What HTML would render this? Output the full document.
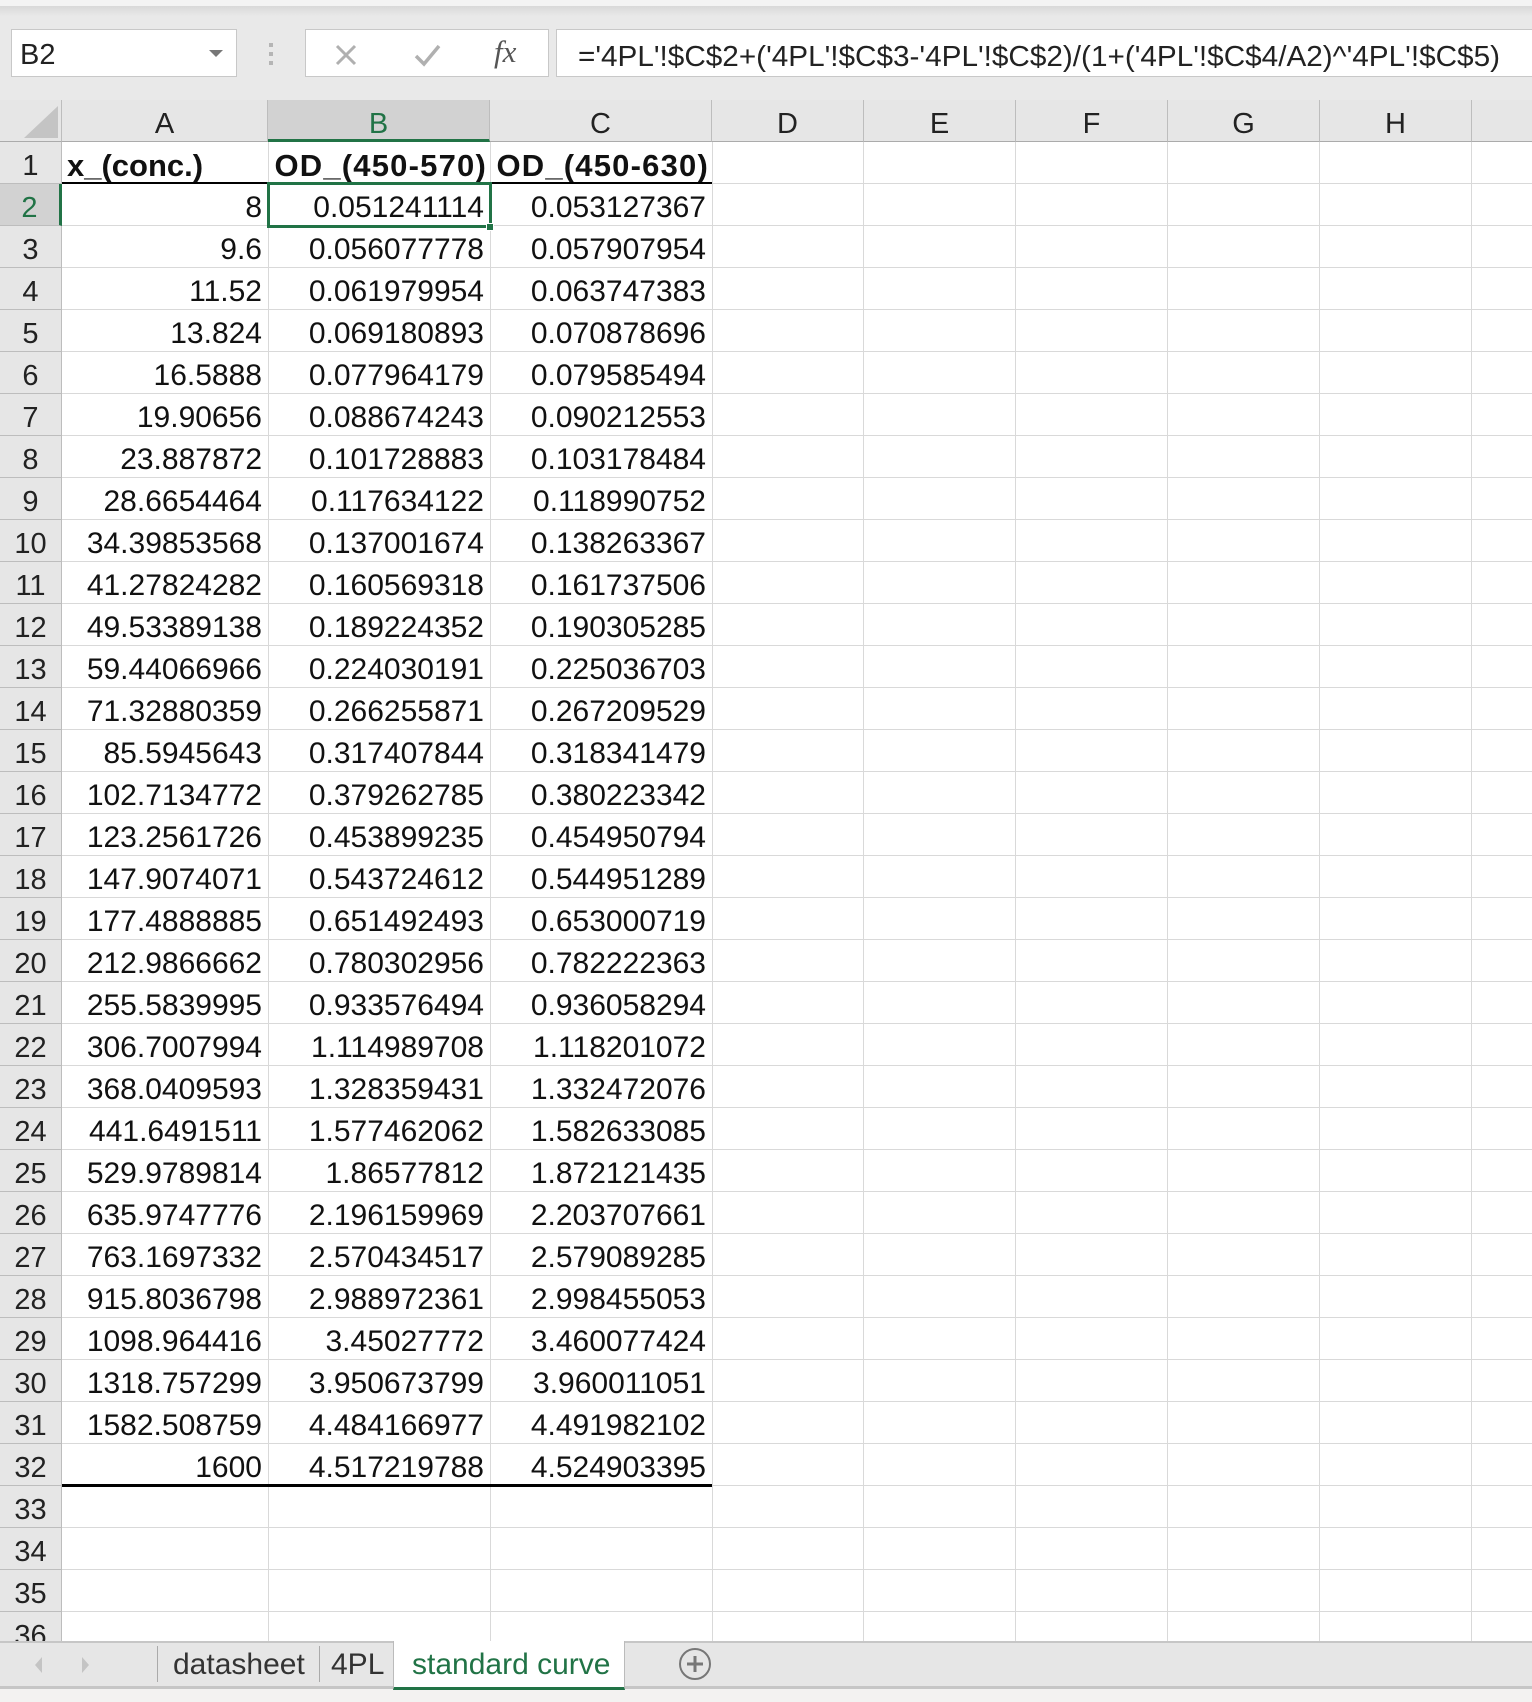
<!DOCTYPE html>
<html><head><meta charset="utf-8"><style>
*{margin:0;padding:0;box-sizing:border-box}
body{width:1532px;height:1702px;overflow:hidden;background:#fff;font-family:"Liberation Sans",sans-serif;position:relative}
.abs{position:absolute}
.row{position:absolute;left:0;width:1532px;height:42px;border-bottom:1px solid #d9d9d9}
.rh{position:absolute;left:0;top:0;width:62px;height:42px;overflow:hidden;background:#e6e6e6;border-right:1px solid #bdbdbd;border-bottom:1px solid #bdbdbd;text-align:center;font-size:29px;line-height:48px;color:#222}
.c{position:absolute;top:0;height:42px;overflow:hidden;font-size:30px;line-height:48px;text-align:right;padding-right:6px;color:#111;white-space:nowrap}
.a{left:62px;width:206px}.b{left:268px;width:222px}.cc{left:490px;width:222px}
.hb{font-weight:bold;font-size:31px;letter-spacing:1.2px;padding-right:3px}
.vl{position:absolute;top:142px;height:1499px;width:1px;background:#d9d9d9}
.ch{position:absolute;top:100px;height:42px;overflow:hidden;background:#e6e6e6;border-right:1px solid #bdbdbd;border-bottom:1px solid #ababab;text-align:center;font-size:29px;line-height:48px;color:#222}
</style></head><body>
<div class="abs" style="left:0;top:0;width:1532px;height:100px;background:#e9e9e9"></div>
<div class="abs" style="left:0;top:0;width:1532px;height:6px;background:#f3f3f3"></div>
<div class="abs" style="left:0;top:6px;width:1532px;height:10px;background:linear-gradient(#d8d8d8,#e9e9e9)"></div>
<div class="abs" style="left:11px;top:29px;width:226px;height:48px;background:#fff;border:1px solid #c8c8c8;font-size:29px;line-height:50px;padding-left:8px;color:#222">B2</div>
<div class="abs" style="left:209px;top:50px;width:0;height:0;border-left:7px solid transparent;border-right:7px solid transparent;border-top:7px solid #777"></div>
<div class="abs" style="left:269px;top:43px;width:4px;height:4px;background:#b5b5b5;box-shadow:0 9px 0 #b5b5b5,0 18px 0 #b5b5b5"></div>
<div class="abs" style="left:305px;top:29px;width:244px;height:48px;background:#fff;border:1px solid #c8c8c8"></div>
<svg class="abs" style="left:332px;top:41px" width="28" height="28"><path d="M5 5L23 23M23 5L5 23" stroke="#b0b0b0" stroke-width="3"/></svg>
<svg class="abs" style="left:412px;top:41px" width="30" height="28"><path d="M4 15L12 23L27 5" stroke="#b0b0b0" stroke-width="3.5" fill="none"/></svg>
<div class="abs" style="left:494px;top:34px;font-family:'Liberation Serif',serif;font-style:italic;font-size:31px;color:#555">fx</div>
<div class="abs" style="left:556px;top:29px;width:990px;height:48px;background:#fff;border:1px solid #c8c8c8"></div>
<svg class="abs" style="left:578px;top:29px" width="930" height="48"><text x="0" y="37" font-family="Liberation Sans" font-size="29" fill="#222" textLength="922" lengthAdjust="spacingAndGlyphs">='4PL'!$C$2+('4PL'!$C$3-'4PL'!$C$2)/(1+('4PL'!$C$4/A2)^'4PL'!$C$5)</text></svg>
<div class="abs" style="left:0;top:100px;width:62px;height:42px;background:#e6e6e6;border-right:1px solid #bdbdbd;border-bottom:1px solid #ababab"></div>
<svg class="abs" style="left:22px;top:104px" width="38" height="36"><path d="M36 2L36 34L2 34Z" fill="#c4c4c4"/></svg>
<div class="ch" style="left:62px;width:206px">A</div>
<div class="ch" style="left:268px;width:222px;background:#d2d2d2;color:#217346;border-bottom:3px solid #217346">B</div>
<div class="ch" style="left:490px;width:222px">C</div>
<div class="ch" style="left:712px;width:152px">D</div>
<div class="ch" style="left:864px;width:152px">E</div>
<div class="ch" style="left:1016px;width:152px">F</div>
<div class="ch" style="left:1168px;width:152px">G</div>
<div class="ch" style="left:1320px;width:152px">H</div>
<div class="ch" style="left:1472px;width:60px;border-right:none"></div>
<div class="row" style="top:142px"><div class="rh">1</div><div class="c a" style="text-align:left;padding-left:5px;font-weight:bold;font-size:31px">x_(conc.)</div><div class="c b hb">OD_(450-570)</div><div class="c cc hb">OD_(450-630)</div></div>
<div class="row" style="top:184px"><div class="rh" style="background:#d2d2d2;color:#217346;border-right:3px solid #217346">2</div><div class="c a">8</div><div class="c b">0.051241114</div><div class="c cc">0.053127367</div></div>
<div class="row" style="top:226px"><div class="rh">3</div><div class="c a">9.6</div><div class="c b">0.056077778</div><div class="c cc">0.057907954</div></div>
<div class="row" style="top:268px"><div class="rh">4</div><div class="c a">11.52</div><div class="c b">0.061979954</div><div class="c cc">0.063747383</div></div>
<div class="row" style="top:310px"><div class="rh">5</div><div class="c a">13.824</div><div class="c b">0.069180893</div><div class="c cc">0.070878696</div></div>
<div class="row" style="top:352px"><div class="rh">6</div><div class="c a">16.5888</div><div class="c b">0.077964179</div><div class="c cc">0.079585494</div></div>
<div class="row" style="top:394px"><div class="rh">7</div><div class="c a">19.90656</div><div class="c b">0.088674243</div><div class="c cc">0.090212553</div></div>
<div class="row" style="top:436px"><div class="rh">8</div><div class="c a">23.887872</div><div class="c b">0.101728883</div><div class="c cc">0.103178484</div></div>
<div class="row" style="top:478px"><div class="rh">9</div><div class="c a">28.6654464</div><div class="c b">0.117634122</div><div class="c cc">0.118990752</div></div>
<div class="row" style="top:520px"><div class="rh">10</div><div class="c a">34.39853568</div><div class="c b">0.137001674</div><div class="c cc">0.138263367</div></div>
<div class="row" style="top:562px"><div class="rh">11</div><div class="c a">41.27824282</div><div class="c b">0.160569318</div><div class="c cc">0.161737506</div></div>
<div class="row" style="top:604px"><div class="rh">12</div><div class="c a">49.53389138</div><div class="c b">0.189224352</div><div class="c cc">0.190305285</div></div>
<div class="row" style="top:646px"><div class="rh">13</div><div class="c a">59.44066966</div><div class="c b">0.224030191</div><div class="c cc">0.225036703</div></div>
<div class="row" style="top:688px"><div class="rh">14</div><div class="c a">71.32880359</div><div class="c b">0.266255871</div><div class="c cc">0.267209529</div></div>
<div class="row" style="top:730px"><div class="rh">15</div><div class="c a">85.5945643</div><div class="c b">0.317407844</div><div class="c cc">0.318341479</div></div>
<div class="row" style="top:772px"><div class="rh">16</div><div class="c a">102.7134772</div><div class="c b">0.379262785</div><div class="c cc">0.380223342</div></div>
<div class="row" style="top:814px"><div class="rh">17</div><div class="c a">123.2561726</div><div class="c b">0.453899235</div><div class="c cc">0.454950794</div></div>
<div class="row" style="top:856px"><div class="rh">18</div><div class="c a">147.9074071</div><div class="c b">0.543724612</div><div class="c cc">0.544951289</div></div>
<div class="row" style="top:898px"><div class="rh">19</div><div class="c a">177.4888885</div><div class="c b">0.651492493</div><div class="c cc">0.653000719</div></div>
<div class="row" style="top:940px"><div class="rh">20</div><div class="c a">212.9866662</div><div class="c b">0.780302956</div><div class="c cc">0.782222363</div></div>
<div class="row" style="top:982px"><div class="rh">21</div><div class="c a">255.5839995</div><div class="c b">0.933576494</div><div class="c cc">0.936058294</div></div>
<div class="row" style="top:1024px"><div class="rh">22</div><div class="c a">306.7007994</div><div class="c b">1.114989708</div><div class="c cc">1.118201072</div></div>
<div class="row" style="top:1066px"><div class="rh">23</div><div class="c a">368.0409593</div><div class="c b">1.328359431</div><div class="c cc">1.332472076</div></div>
<div class="row" style="top:1108px"><div class="rh">24</div><div class="c a">441.6491511</div><div class="c b">1.577462062</div><div class="c cc">1.582633085</div></div>
<div class="row" style="top:1150px"><div class="rh">25</div><div class="c a">529.9789814</div><div class="c b">1.86577812</div><div class="c cc">1.872121435</div></div>
<div class="row" style="top:1192px"><div class="rh">26</div><div class="c a">635.9747776</div><div class="c b">2.196159969</div><div class="c cc">2.203707661</div></div>
<div class="row" style="top:1234px"><div class="rh">27</div><div class="c a">763.1697332</div><div class="c b">2.570434517</div><div class="c cc">2.579089285</div></div>
<div class="row" style="top:1276px"><div class="rh">28</div><div class="c a">915.8036798</div><div class="c b">2.988972361</div><div class="c cc">2.998455053</div></div>
<div class="row" style="top:1318px"><div class="rh">29</div><div class="c a">1098.964416</div><div class="c b">3.45027772</div><div class="c cc">3.460077424</div></div>
<div class="row" style="top:1360px"><div class="rh">30</div><div class="c a">1318.757299</div><div class="c b">3.950673799</div><div class="c cc">3.960011051</div></div>
<div class="row" style="top:1402px"><div class="rh">31</div><div class="c a">1582.508759</div><div class="c b">4.484166977</div><div class="c cc">4.491982102</div></div>
<div class="row" style="top:1444px"><div class="rh">32</div><div class="c a">1600</div><div class="c b">4.517219788</div><div class="c cc">4.524903395</div></div>
<div class="row" style="top:1486px"><div class="rh">33</div></div>
<div class="row" style="top:1528px"><div class="rh">34</div></div>
<div class="row" style="top:1570px"><div class="rh">35</div></div>
<div class="row" style="top:1612px"><div class="rh">36</div></div>
<div class="vl" style="left:268px"></div><div class="vl" style="left:490px"></div><div class="vl" style="left:712px"></div>
<div class="vl" style="left:863px"></div><div class="vl" style="left:1015px"></div><div class="vl" style="left:1167px"></div>
<div class="vl" style="left:1319px"></div><div class="vl" style="left:1471px"></div>
<div class="abs" style="left:62px;top:182px;width:650px;height:2px;background:#000"></div>
<div class="abs" style="left:62px;top:1484px;width:650px;height:3px;background:#000"></div>
<div class="abs" style="left:267px;top:182px;width:225px;height:46px;border:3px solid #217346"></div>
<div class="abs" style="left:486px;top:223px;width:8px;height:8px;background:#217346;border:1px solid #fff"></div>
<div class="abs" style="left:0;top:1641px;width:1532px;height:48px;background:#e6e6e6;border-top:2px solid #c6c6c6;border-bottom:3px solid #c6c6c6"></div>
<div class="abs" style="left:0;top:1689px;width:1532px;height:13px;background:#f3f2f1"></div>
<div class="abs" style="left:35px;top:1657px;width:0;height:0;border-top:8px solid transparent;border-bottom:8px solid transparent;border-right:7px solid #c4c4c4"></div>
<div class="abs" style="left:82px;top:1657px;width:0;height:0;border-top:8px solid transparent;border-bottom:8px solid transparent;border-left:7px solid #c4c4c4"></div>
<div class="abs" style="left:157px;top:1646px;width:1px;height:36px;background:#aaa"></div>
<div class="abs" style="left:173px;top:1643px;font-size:30px;line-height:44px;color:#333">datasheet</div>
<div class="abs" style="left:319px;top:1646px;width:1px;height:36px;background:#aaa"></div>
<div class="abs" style="left:331px;top:1643px;font-size:30px;line-height:44px;color:#333">4PL</div>
<div class="abs" style="left:393px;top:1641px;width:232px;height:49px;background:#fff;border-left:1px solid #bbb;border-right:1px solid #bbb;border-bottom:3px solid #217346"></div>
<div class="abs" style="left:412px;top:1643px;font-size:30px;line-height:44px;color:#217346">standard curve</div>
<svg class="abs" style="left:678px;top:1647px" width="34" height="34"><circle cx="17" cy="17" r="15" fill="none" stroke="#777" stroke-width="2"/><path d="M17 9V25M9 17H25" stroke="#777" stroke-width="3"/></svg>
</body></html>
